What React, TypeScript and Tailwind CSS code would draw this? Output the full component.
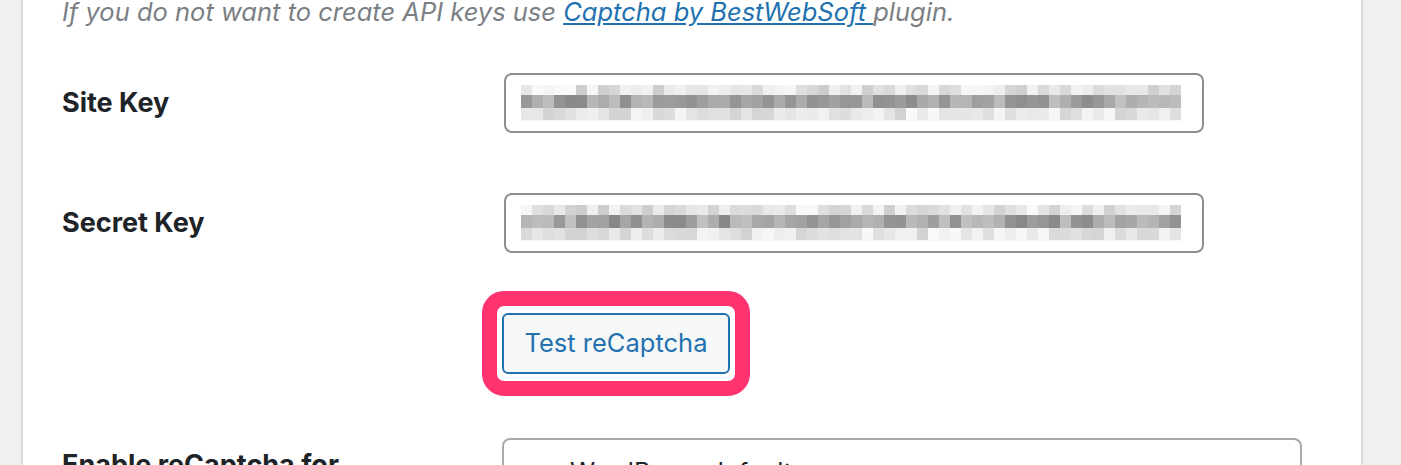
const FONT = { fontFamily: 'Inter, "Noto Sans", sans-serif' }

// deterministic noise so the blurred key looks the same on every render
function makeBlocks(seed: number, count: number) {
  let s = seed
  const rnd = () => {
    s = (s * 1103515245 + 12345) % 2147483648
    return s / 2147483648
  }
  const rows: string[][] = [[], [], []]
  for (let i = 0; i < count; i++) {
    const a = 205 + Math.floor(rnd() * 45)
    const b = 135 + Math.floor(rnd() * 60)
    const c = 210 + Math.floor(rnd() * 40)
    rows[0].push(`rgb(${a},${a},${a + 2})`)
    rows[1].push(`rgb(${b},${b},${b + 2})`)
    rows[2].push(`rgb(${c},${c},${c + 2})`)
  }
  return rows
}

function Pixelated({ seed }: { seed: number }) {
  const rows = makeBlocks(seed, 60)
  const heights = [10, 13, 12]
  const ys = [0, 10, 23]
  return (
    <svg width="660" height="36" viewBox="0 0 660 36" aria-hidden="true">
      <rect x="0" y="0" width="660" height="36" fill="#f6f6f7" />
      {rows.map((row, r) =>
        row.map((fill, i) => (
          <rect key={`${r}-${i}`} x={i * 11} y={ys[r]} width="11" height={heights[r]} fill={fill} />
        ))
      )}
    </svg>
  )
}

function KeyField({ seed }: { seed: number }) {
  return (
    <div className="ml-[2px] flex h-[60px] w-[700px] items-center overflow-hidden rounded-[8px] border-2 border-[#8c8f94] bg-white pl-[15px]">
      <Pixelated seed={seed} />
    </div>
  )
}

export default function App() {
  return (
    <div className="flex h-[465px] w-full overflow-hidden bg-[#f0f0f1]" style={FONT}>
      <div className="w-[21px] shrink-0" />
      <div className="w-[1342px] shrink-0 border-x-2 border-[#dcdcde] bg-white pl-[39px]">
        <p className="-mt-[4px] h-[31px] text-[25.5px] leading-[31px] italic text-[#7b7f84] whitespace-nowrap">
          If you do not want to create API keys use{' '}
          <a href="#" className="text-[#2271b1] underline underline-offset-2">
            Captcha by BestWebSoft{' '}
          </a>
          plugin.
        </p>

        {/* keys */}
        <div className="mt-[46px] flex items-center">
          <div className="w-[440px] text-[27px] font-bold text-[#1d2327]">Site Key</div>
          <KeyField seed={7} />
        </div>
        <div className="mt-[60px] flex items-center">
          <div className="w-[440px] text-[27px] font-bold text-[#1d2327]">Secret Key</div>
          <KeyField seed={31} />
        </div>

        {/* highlighted test button */}
        <div className="mt-[38px] pl-[420px]">
          <div className="inline-flex rounded-[22px] border-[15px] border-[#ff3370] bg-white px-[5px] py-[7px]">
            <button className="h-[61px] w-[228px] rounded-[6px] border-2 border-[#2271b1] bg-[#f6f7f7] text-[25.5px] text-[#2271b1]">
              Test reCaptcha
            </button>
          </div>
        </div>

        <div className="mt-[42px] flex items-start">
          <div className="w-[440px] pt-[10px] text-[27px] font-bold leading-[34px] text-[#1d2327] whitespace-nowrap">
            Enable reCaptcha for
          </div>
          <div className="h-[80px] w-[800px] rounded-t-[8px] border-2 border-[#a7aaad] bg-white pl-[66px] pt-[17px] text-[25.5px] leading-[30px] text-[#1d2327]">
            WordPress default
          </div>
        </div>
      </div>
    </div>
  )
}
